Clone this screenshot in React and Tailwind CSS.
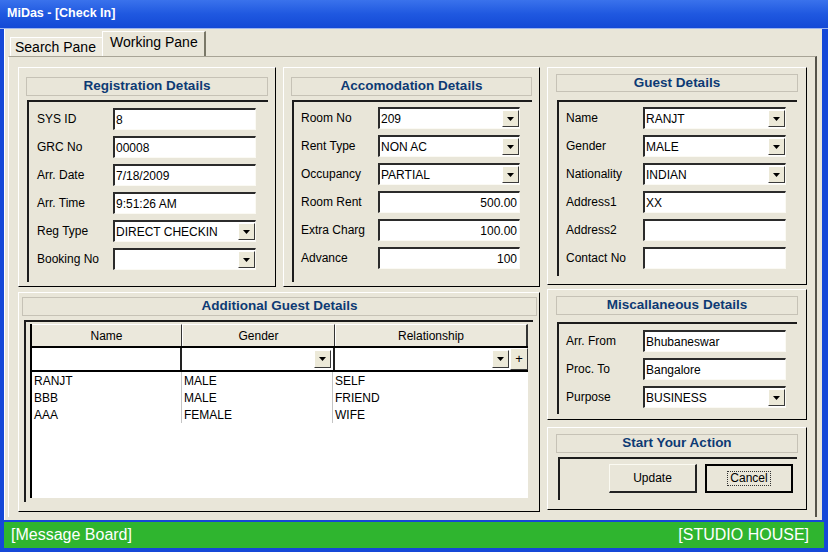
import React from 'react';

const sunken =
  'border-t-2 border-l-2 border-t-[#2b2b2b] border-l-[#2b2b2b] border-r border-b border-r-[#fbfaf4] border-b-[#fbfaf4]';
const raised =
  'border-t border-l border-t-white border-l-white border-r border-b border-r-[#3a3a3a] border-b-[#3a3a3a]';

const Arrow = () => (
  <span className={`w-[17px] shrink-0 bg-[#ece9d8] flex items-center justify-center ${raised}`}>
    <svg width="7" height="4" viewBox="0 0 7 4">
      <path d="M0 0H7L3.5 4Z" fill="#000" />
    </svg>
  </span>
);

const TextBox = ({ value, w, right }) => (
  <div className={`h-[22px] bg-white flex items-center ${sunken} ${w} ${right ? 'justify-end pr-[2px]' : 'pl-[1px]'}`}>
    <span className="whitespace-nowrap">{value}</span>
  </div>
);

const Combo = ({ value, w }) => (
  <div className={`h-[22px] bg-white flex items-stretch ${sunken} ${w}`}>
    <span className="flex-1 pl-[1px] flex items-center whitespace-nowrap">{value}</span>
    <span className="flex py-[1px]">
      <Arrow />
    </span>
  </div>
);

const Field = ({ label, lw, children }) => (
  <div className="flex items-center">
    <span className={`shrink-0 ${lw}`}>{label}</span>
    {children}
  </div>
);

// group frame: raised outer, grey title strip, sunken inner
const Group = ({ title, outer, head, inner, children }) => (
  <div className={`flex flex-col border border-t-white border-l-white border-r-black border-b-black ${outer}`}>
    <div className={`shrink-0 border border-[#c6c2b6] flex items-center justify-center text-[13.5px] font-bold text-[#0d3a74] ${head}`}>
      {title}
    </div>
    <div className={`flex-1 border-t-2 border-l-2 border-t-[#1c1c1c] border-l-[#1c1c1c] ${inner}`}>{children}</div>
  </div>
);

const guests = [
  ['RANJT', 'MALE', 'SELF'],
  ['BBB', 'MALE', 'FRIEND'],
  ['AAA', 'FEMALE', 'WIFE'],
];

export default function App() {
  return (
    <div className="w-[828px] h-[552px] flex flex-col bg-[#1548d8] font-['Liberation_Sans',Arial,sans-serif] text-[12px] text-black overflow-hidden">
      {/* title bar */}
      <div className="h-[29px] shrink-0 bg-gradient-to-b from-[#3a72ec] via-[#1f58e0] to-[#1449d6] flex items-center pl-[7px] pb-[2px] border-b border-b-[#9db4ee]">
        <span className="text-white font-bold text-[12.5px]">MiDas - [Check In]</span>
      </div>

      {/* client */}
      <div className="ml-[4px] mr-[6px] h-[491px] shrink-0 bg-[#e9e6d9] border-l border-l-white flex flex-col">
        {/* tabs */}
        <div className="h-[27px] shrink-0 flex items-end pl-[5px]">
          <div className="h-[19px] w-[92px] flex items-center pl-[4px] text-[14px] border-t border-l border-t-white border-l-white bg-[#eeebe0]">
            Search Pane
          </div>
          <div className="h-[25px] w-[104px] flex items-center pl-[7px] pb-[3px] text-[14px] border-t border-l border-r-2 border-t-white border-l-white border-r-[#7a7868] bg-[#e9e6d9]">
            Working Pane
          </div>
        </div>

        {/* pane */}
        <div className="ml-[3px] w-[809px] h-[461px] border-t border-l border-t-[#a8a496] border-l-white border-r-2 border-r-[#55534a] flex gap-[7px] pl-[9px] pt-[10px]">
          {/* left column */}
          <div className="w-[522px] flex flex-col gap-[5px]">
            <div className="flex gap-[7px]">
              <Group
                title="Registration Details"
                outer="w-[258px] h-[220px] px-[7px] pt-[9px] pb-[4px]"
                head="h-[19px]"
                inner="mt-[4px] ml-[1px] pl-[8px] pt-[6px] flex flex-col gap-[6px]"
              >
                <Field label="SYS ID" lw="w-[76px]"><TextBox value="8" w="w-[143px]" /></Field>
                <Field label="GRC No" lw="w-[76px]"><TextBox value="00008" w="w-[143px]" /></Field>
                <Field label="Arr. Date" lw="w-[76px]"><TextBox value="7/18/2009" w="w-[143px]" /></Field>
                <Field label="Arr. Time" lw="w-[76px]"><TextBox value="9:51:26 AM" w="w-[143px]" /></Field>
                <Field label="Reg Type" lw="w-[76px]"><Combo value="DIRECT CHECKIN" w="w-[143px]" /></Field>
                <Field label="Booking No" lw="w-[76px]"><Combo value="" w="w-[143px]" /></Field>
              </Group>
              <Group
                title="Accomodation Details"
                outer="w-[257px] h-[220px] px-[7px] pt-[9px] pb-[4px]"
                head="h-[19px]"
                inner="mt-[4px] ml-[1px] pl-[7px] pt-[5px] flex flex-col gap-[6px]"
              >
                <Field label="Room No" lw="w-[77px]"><Combo value="209" w="w-[142px]" /></Field>
                <Field label="Rent Type" lw="w-[77px]"><Combo value="NON AC" w="w-[142px]" /></Field>
                <Field label="Occupancy" lw="w-[77px]"><Combo value="PARTIAL" w="w-[142px]" /></Field>
                <Field label="Room Rent" lw="w-[77px]"><TextBox value="500.00" w="w-[142px]" right /></Field>
                <Field label="Extra Charg" lw="w-[77px]"><TextBox value="100.00" w="w-[142px]" right /></Field>
                <Field label="Advance" lw="w-[77px]"><TextBox value="100" w="w-[142px]" right /></Field>
              </Group>
            </div>

            <Group
              title="Additional Guest Details"
              outer="w-[522px] h-[220px] pl-[3px] pr-[2px] pt-[4px] pb-[9px]"
              head="h-[19px]"
              inner="mt-[4px] ml-[2px] mr-[4px] pl-[4px] pt-[2px]"
            >
              <div className="w-[498px] h-[174px] flex flex-col border-l-2 border-l-black">
                <div className="h-[24px] shrink-0 flex border-b-2 border-b-black bg-[#ebe8dc]">
                  <div className="w-[150px] flex items-center justify-center border-t border-t-white border-r border-r-[#333]">Name</div>
                  <div className="w-[153px] flex items-center justify-center border-t border-l border-t-white border-l-white border-r border-r-[#333]">Gender</div>
                  <div className="w-[193px] flex items-center justify-center border-t border-l border-t-white border-l-white border-r-2 border-r-[#333]">Relationship</div>
                </div>
                <div className="h-[24px] shrink-0 flex border-b-2 border-b-black">
                  <div className="w-[150px] bg-white border-r-2 border-r-[#222]" />
                  <div className="w-[153px] bg-white flex justify-end py-[2px] pr-[2px] border-r-2 border-r-[#222]">
                    <Arrow />
                  </div>
                  <div className="w-[175px] bg-white flex justify-end py-[2px] pr-[1px]">
                    <Arrow />
                  </div>
                  <div className={`w-[18px] bg-[#ece9d8] flex items-center justify-center text-[13px] ${raised}`}>+</div>
                </div>
                <div className="flex-1 bg-white">
                  {guests.map(([n, g, r]) => (
                    <div key={n} className="flex h-[17px] items-center">
                      <div className="w-[150px] h-full pl-[2px] flex items-center border-r border-r-[#c4c4c4]">{n}</div>
                      <div className="w-[151px] h-full pl-[2px] flex items-center border-r border-r-[#c4c4c4]">{g}</div>
                      <div className="flex-1 pl-[2px]">{r}</div>
                    </div>
                  ))}
                </div>
              </div>
            </Group>
          </div>

          {/* right column */}
          <div className="w-[260px] flex flex-col">
            <Group
              title="Guest Details"
              outer="h-[218px] px-[8px] pt-[6px] pb-[8px]"
              head="h-[18px]"
              inner="mt-[8px] ml-[1px] mr-[1px] pl-[7px] pt-[5px] flex flex-col gap-[6px]"
            >
              <Field label="Name" lw="w-[77px]"><Combo value="RANJT" w="w-[143px]" /></Field>
              <Field label="Gender" lw="w-[77px]"><Combo value="MALE" w="w-[143px]" /></Field>
              <Field label="Nationality" lw="w-[77px]"><Combo value="INDIAN" w="w-[143px]" /></Field>
              <Field label="Address1" lw="w-[77px]"><TextBox value="XX" w="w-[143px]" /></Field>
              <Field label="Address2" lw="w-[77px]"><TextBox value="" w="w-[143px]" /></Field>
              <Field label="Contact No" lw="w-[77px]"><TextBox value="" w="w-[143px]" /></Field>
            </Group>

            <Group
              title="Miscallaneous Details"
              outer="mt-[4px] h-[131px] px-[8px] pt-[6px] pb-[5px]"
              head="h-[19px]"
              inner="mt-[7px] ml-[1px] mr-[1px] pl-[7px] pt-[6px] flex flex-col gap-[6px]"
            >
              <Field label="Arr. From" lw="w-[77px]"><TextBox value="Bhubaneswar" w="w-[143px]" /></Field>
              <Field label="Proc. To" lw="w-[77px]"><TextBox value="Bangalore" w="w-[143px]" /></Field>
              <Field label="Purpose" lw="w-[77px]"><Combo value="BUSINESS" w="w-[143px]" /></Field>
            </Group>

            <Group
              title="Start Your Action"
              outer="mt-[7px] h-[83px] px-[8px] pt-[6px] pb-[9px]"
              head="h-[19px]"
              inner="mt-[4px] ml-[2px] mr-[1px] flex justify-end gap-[8px] pr-[4px] pt-[5px]"
            >
              <div className="w-[88px] h-[29px] flex items-center justify-center border-t border-l border-t-[#fbfaf2] border-l-[#fbfaf2] border-r-2 border-b-2 border-r-[#222] border-b-[#222]">
                Update
              </div>
              <div className="w-[88px] h-[29px] flex items-center justify-center border-2 border-black">
                <span className="px-[2px] leading-[13px] border border-dotted border-[#333]">Cancel</span>
              </div>
            </Group>
          </div>
        </div>
      </div>

      {/* status bar */}
      <div className="mt-[2px] ml-[4px] mr-[4px] h-[26px] shrink-0 bg-[#2fb52f] flex items-center justify-between pl-[7px] pr-[15px] text-white text-[16px]">
        <span>[Message Board]</span>
        <span>[STUDIO HOUSE]</span>
      </div>
    </div>
  );
}
